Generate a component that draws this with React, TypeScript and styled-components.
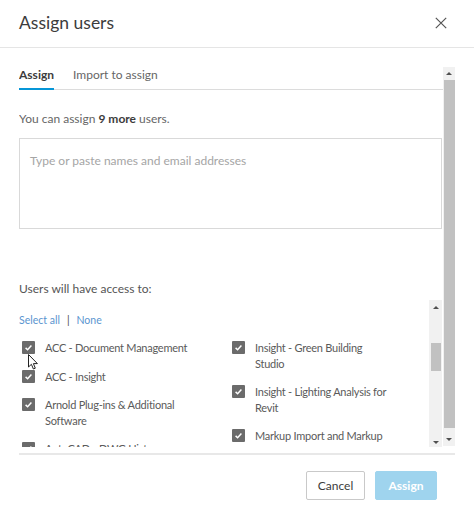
import React from "react";
import styled, { createGlobalStyle } from "styled-components";

const GlobalStyle = createGlobalStyle`
  html, body { margin: 0; padding: 0; background: #ffffff; }
  body { font-family: Lato, "Open Sans", sans-serif; color: #3c3c3c; }
  * { box-sizing: border-box; }
`;

const Dialog = styled.div`
  width: 474px;
  height: 521px;
  display: flex;
  flex-direction: column;
  background: #fff;
`;

const Header = styled.div`
  height: 48px;
  flex: none;
  display: flex;
  align-items: center;
  justify-content: space-between;
  padding: 0 27px 2px 19px;
  border-bottom: 1px solid #e5e5e5;
`;

const Title = styled.h1`
  margin: 0;
  font-size: 17.5px;
  font-weight: 400;
  color: #3c3c3c;
`;

const CloseButton = styled.button`
  border: 0;
  background: none;
  padding: 0;
  width: 12px;
  height: 12px;
  display: flex;
  cursor: pointer;
`;

const Body = styled.div`
  height: 405px;
  flex: none;
  display: flex;
  align-items: flex-start;
  padding: 19px 19px 0 19px;
`;

const Content = styled.div`
  flex: 1;
  height: 380px;
  overflow: hidden;
  display: flex;
  flex-direction: column;
`;

const TabList = styled.div`
  display: flex;
  gap: 19px;
  height: 23px;
  flex: none;
  border-bottom: 1px solid #dcdcdc;
`;

const Tab = styled.div<{ $active?: boolean }>`
  height: 23px;
  font-size: 12px;
  line-height: 16px;
  font-weight: ${(p) => (p.$active ? 700 : 400)};
  color: ${(p) => (p.$active ? "#3c3c3c" : "#666666")};
  border-bottom: 2px solid ${(p) => (p.$active ? "#0696d7" : "transparent")};
`;

const Quota = styled.p`
  margin: 21px 0 0;
  font-size: 12px;
  line-height: 16px;
  color: #666666;
  b { color: #3c3c3c; font-weight: 700; }
`;

const NamesInput = styled.textarea`
  margin-top: 11px;
  width: 423px;
  height: 91px;
  flex: none;
  border: 1px solid #d9d9d9;
  border-radius: 0;
  padding: 14px 10px;
  resize: none;
  outline: none;
  font-family: inherit;
  font-size: 12px;
  line-height: 16px;
  color: #3c3c3c;
  &::placeholder { color: #a5a5a5; }
`;

const SectionLabel = styled.p`
  margin: 52px 0 0;
  font-size: 12px;
  line-height: 16px;
  color: #555555;
`;

const ListBox = styled.div`
  margin-top: 3px;
  height: 147px;
  flex: none;
  display: flex;
  overflow: hidden;
`;

const ListContent = styled.div`
  flex: 1;
  position: relative;
  padding-top: 12px;
`;

const SelectRow = styled.div`
  display: flex;
  align-items: center;
  gap: 7px;
  font-size: 10.5px;
  line-height: 16px;
  color: #5b95cf;
`;

const LinkText = styled.span`
  cursor: pointer;
`;

const Separator = styled.span`
  color: #4a4a4a;
`;

const Columns = styled.div`
  display: grid;
  grid-template-columns: 210px 1fr;
  padding-left: 3px;
  margin-top: 12px;
`;

const Column = styled.div`
  display: flex;
  flex-direction: column;
  gap: 13px;
`;

const Item = styled.label`
  display: flex;
  align-items: flex-start;
  gap: 10px;
`;

const Box = styled.span`
  flex: none;
  width: 13px;
  height: 13px;
  margin-top: 1px;
  border-radius: 1px;
  background: #6b6b6b;
  display: flex;
`;

const ItemText = styled.span`
  white-space: pre-line;
  font-size: 11px;
  line-height: 15.5px;
  letter-spacing: -0.25px;
  color: #5a5a5a;
`;

const Cursor = styled.svg`
  position: absolute;
  left: 9px;
  top: 54px;
`;

const Track = styled.div<{ $width: number; $height: number }>`
  flex: none;
  width: ${(p) => p.$width}px;
  height: ${(p) => p.$height}px;
  background: #f1f1f1;
  display: flex;
  flex-direction: column;
  align-items: center;
`;

const ArrowCell = styled.div<{ $height: number }>`
  height: ${(p) => p.$height}px;
  width: 100%;
  flex: none;
  display: flex;
  align-items: center;
  justify-content: center;
`;

const Arrow = styled.span<{ $down?: boolean }>`
  width: 0;
  height: 0;
  border-left: 3px solid transparent;
  border-right: 3px solid transparent;
  ${(p) =>
    p.$down
      ? "border-top: 3px solid #505050;"
      : "border-bottom: 3px solid #505050;"}
`;

const Thumb = styled.div<{ $top: number; $height: number; $width: number }>`
  flex: none;
  margin-top: ${(p) => p.$top}px;
  height: ${(p) => p.$height}px;
  width: ${(p) => p.$width}px;
  background: #c1c1c1;
`;

const Spacer = styled.div`
  flex: 1;
`;

const InnerScroll = styled(Track)`
  margin-right: 1px;
`;

const Footer = styled.div`
  flex: none;
  margin: 0 19px;
  border-top: 2px solid #e8e8e8;
  padding: 16px 18px 0 0;
  display: flex;
  justify-content: flex-end;
  gap: 10px;
`;

const Button = styled.button<{ $primary?: boolean; $width: number }>`
  height: 29px;
  width: ${(p) => p.$width}px;
  padding: 0;
  border-radius: 2px;
  font-family: inherit;
  font-size: 12px;
  font-weight: ${(p) => (p.$primary ? 700 : 400)};
  color: ${(p) => (p.$primary ? "#ffffff" : "#3c3c3c")};
  background: ${(p) => (p.$primary ? "#9fd4ee" : "#ffffff")};
  border: 1px solid ${(p) => (p.$primary ? "#9fd4ee" : "#c9c9c9")};
  cursor: pointer;
`;

const leftItems = [
  "ACC - Document Management",
  "ACC - Insight",
  "Arnold Plug-ins & Additional\nSoftware",
  "AutoCAD - DWG History",
];
const rightItems = [
  "Insight - Green Building\nStudio",
  "Insight - Lighting Analysis for\nRevit",
  "Markup Import and Markup",
];

function Check() {
  return (
    <Box>
      <svg width="13" height="13" viewBox="0 0 13 13">
        <path d="M3.6 6.9 L5.6 8.7 L9.4 4.6" fill="none" stroke="#fff" strokeWidth="1.5" />
      </svg>
    </Box>
  );
}

function ProductItem({ name }: { name: string }) {
  return (
    <Item>
      <Check />
      <ItemText>{name}</ItemText>
    </Item>
  );
}

export default function App() {
  return (
    <Dialog>
      <GlobalStyle />
      <Header>
        <Title>Assign users</Title>
        <CloseButton aria-label="Close">
          <svg width="12" height="12" viewBox="0 0 12 12">
            <path d="M0.8 0.8 L11.2 11.2 M11.2 0.8 L0.8 11.2" stroke="#555" strokeWidth="1.2" />
          </svg>
        </CloseButton>
      </Header>
      <Body>
        <Content>
          <TabList>
            <Tab $active>Assign</Tab>
            <Tab>Import to assign</Tab>
          </TabList>
          <Quota>
            You can assign <b>9 more</b> users.
          </Quota>
          <NamesInput placeholder="Type or paste names and email addresses" />
          <SectionLabel>Users will have access to:</SectionLabel>
          <ListBox>
            <ListContent>
              <SelectRow>
                <LinkText>Select all</LinkText>
                <Separator>|</Separator>
                <LinkText>None</LinkText>
              </SelectRow>
              <Columns>
                <Column>
                  {leftItems.map((n) => (
                    <ProductItem key={n} name={n} />
                  ))}
                </Column>
                <Column>
                  {rightItems.map((n) => (
                    <ProductItem key={n} name={n} />
                  ))}
                </Column>
              </Columns>
              <Cursor width="11" height="17" viewBox="0 0 11 17">
                <path
                  d="M0.5 0.5 L0.5 13 L3.4 10.3 L5.4 15 L7.3 14.2 L5.4 9.6 L9.4 9.6 Z"
                  fill="#fff"
                  stroke="#222"
                  strokeWidth="1"
                  strokeLinejoin="round"
                />
              </Cursor>
            </ListContent>
            <InnerScroll $width={13} $height={147}>
              <ArrowCell $height={15}>
                <Arrow />
              </ArrowCell>
              <Thumb $top={28} $height={28} $width={10} />
              <Spacer />
              <ArrowCell $height={9}>
                <Arrow $down />
              </ArrowCell>
            </InnerScroll>
          </ListBox>
        </Content>
        <Track $width={12} $height={379}>
          <ArrowCell $height={12}>
            <Arrow />
          </ArrowCell>
          <Thumb $top={1} $height={348} $width={11} />
          <Spacer />
          <ArrowCell $height={13}>
            <Arrow $down />
          </ArrowCell>
        </Track>
      </Body>
      <Footer>
        <Button $width={59}>Cancel</Button>
        <Button $primary $width={62}>Assign</Button>
      </Footer>
    </Dialog>
  );
}
